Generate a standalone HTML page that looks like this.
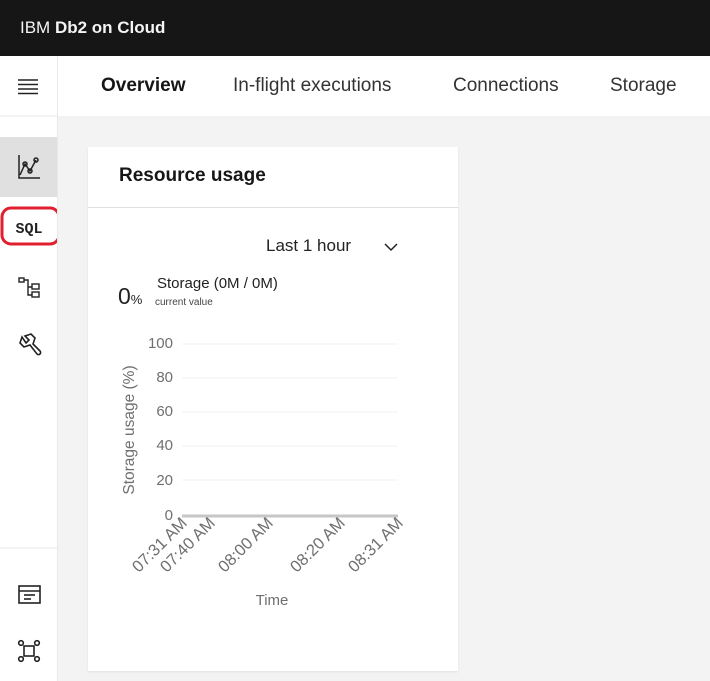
<!DOCTYPE html><html><head><style>
body{margin:0;width:710px;height:681px;overflow:hidden;font-family:"Liberation Sans",sans-serif;background:#f3f3f3;position:relative}
.top{position:absolute;left:0;top:0;width:710px;height:56px;background:#161616;color:#f4f4f4;font-size:17px;line-height:56px}
.top span{position:absolute;left:20px}
.side{position:absolute;left:0;top:56px;width:57px;height:625px;background:#fff;border-right:1px solid #e8e8e8}
.tabs{position:absolute;left:58px;top:56px;width:652px;height:60px;background:#fff;font-size:19px;color:#333}
.tabs div{position:absolute;top:19px}
.card{position:absolute;left:88px;top:147px;width:370px;height:524px;background:#fff;box-shadow:0 1px 2px rgba(0,0,0,.08)}
</style></head><body>
<div class="top"><span>IBM <b>Db2 on Cloud</b></span></div>
<div class="side">
<svg width="57" height="625" style="position:absolute;left:0;top:0">
<g stroke="#222" stroke-width="1.6"><line x1="18" y1="24" x2="38" y2="24"/><line x1="18" y1="28.5" x2="38" y2="28.5"/><line x1="18" y1="33" x2="38" y2="33"/><line x1="18" y1="37.5" x2="38" y2="37.5"/></g>
<line x1="0" y1="60" x2="57" y2="60" stroke="#e8e8e8"/>
<rect x="0" y="81" width="57" height="60" fill="#e0e0e0"/>
<g fill="none" stroke="#222" stroke-width="1.5"><path d="M19 99V122H40"/><path d="M20 119L25 108L30 115L36 104"/><circle cx="25" cy="108" r="2"/><circle cx="30" cy="115" r="2"/><circle cx="36" cy="104" r="2"/></g>
<rect x="2" y="152" width="57" height="36" rx="9" fill="none" stroke="#e0202e" stroke-width="3"/>
<text x="29" y="177" font-size="15" font-weight="bold" text-anchor="middle" fill="#222" font-family="Liberation Mono,monospace">SQL</text>
<g fill="none" stroke="#222" stroke-width="1.4"><rect x="19" y="222" width="5" height="4"/><rect x="32" y="228" width="7" height="5"/><rect x="32" y="236" width="7" height="5"/><path d="M24 224H28V239H32M28 231H32"/></g>
<g fill="none" stroke="#222" stroke-width="1.6"><path d="M22 281L20 287L24 291L30 289L37 298A2 2 0 0 0 40 295L33 288L35 282L31 278L25 280L29 284L26 287Z"/></g>
<line x1="0" y1="492" x2="57" y2="492" stroke="#e8e8e8"/>
<g fill="none" stroke="#222" stroke-width="1.6"><rect x="19" y="530" width="21" height="17"/><line x1="19" y1="535" x2="40" y2="535"/><line x1="24" y1="539" x2="35" y2="539"/><line x1="24" y1="543" x2="31" y2="543"/></g>
<g fill="none" stroke="#222" stroke-width="1.6"><rect x="24" y="590" width="10" height="10"/><circle cx="21" cy="587" r="2.3"/><circle cx="37" cy="587" r="2.3"/><circle cx="21" cy="603" r="2.3"/><circle cx="37" cy="603" r="2.3"/></g>
</svg></div>
<div class="tabs">
<div style="left:43px;font-weight:bold;color:#161616">Overview</div>
<div style="left:175px">In-flight executions</div>
<div style="left:395px">Connections</div>
<div style="left:552px">Storage</div>
</div>
<div class="card">
<div style="position:absolute;left:31px;top:18px;font-size:19px;font-weight:bold;color:#161616">Resource usage</div>
<div style="position:absolute;left:0;top:60px;width:370px;height:1px;background:#e0e0e0"></div>
<div style="position:absolute;left:178px;top:89px;font-size:17px;color:#222">Last 1 hour</div>
<svg style="position:absolute;left:296px;top:95px" width="14" height="10"><path d="M1 2L7 8L13 2" fill="none" stroke="#222" stroke-width="1.5"/></svg>
<div style="position:absolute;left:30px;top:136px;font-size:23px;color:#222">0<span style="font-size:13px">%</span></div>
<div style="position:absolute;left:69px;top:128px;font-size:15px;color:#222">Storage (0M / 0M)</div>
<div style="position:absolute;left:67px;top:150px;font-size:10px;color:#444">current value</div>
<svg style="position:absolute;left:0;top:0" width="370" height="524" font-family="Liberation Sans,sans-serif" fill="#6f6f6f" font-size="15">
<g stroke="#f0f0f0"><line x1="94" y1="197" x2="310" y2="197"/><line x1="94" y1="231" x2="310" y2="231"/><line x1="94" y1="265" x2="310" y2="265"/><line x1="94" y1="299" x2="310" y2="299"/><line x1="94" y1="333" x2="310" y2="333"/></g>
<line x1="94" y1="369" x2="310" y2="369" stroke="#c6c6c6" stroke-width="3"/>
<g text-anchor="end"><text x="85" y="201">100</text><text x="85" y="235">80</text><text x="85" y="269">60</text><text x="85" y="303">40</text><text x="85" y="338">20</text><text x="85" y="373">0</text></g>
<text transform="translate(46 283) rotate(-90)" text-anchor="middle" font-size="15.5">Storage usage (%)</text>
<g text-anchor="end" font-size="16.5">
<text transform="translate(100 377) rotate(-45)">07:31 AM</text>
<text transform="translate(128 377) rotate(-45)">07:40 AM</text>
<text transform="translate(186 377) rotate(-45)">08:00 AM</text>
<text transform="translate(258 377) rotate(-45)">08:20 AM</text>
<text transform="translate(316 377) rotate(-45)">08:31 AM</text>
</g>
<text x="184" y="458" text-anchor="middle">Time</text>
</svg>
</div>
</body></html>
